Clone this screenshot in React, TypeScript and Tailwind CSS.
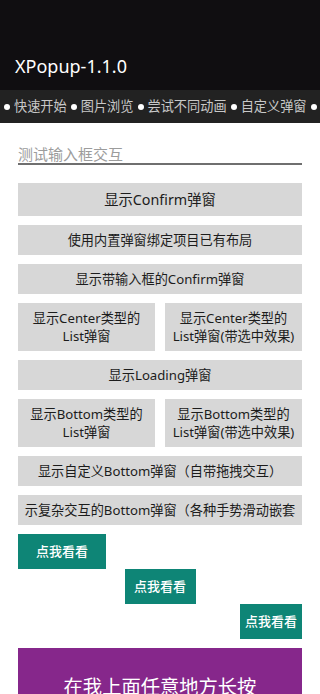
import React from "react";

const font = { fontFamily: '"Noto Sans", "Noto Sans CJK SC", sans-serif' };

function GrayBtn({ children }: { children: React.ReactNode }) {
  return (
    <div className="mt-[9px] h-[30px] bg-[#d7d7d7] flex items-center justify-center text-center text-[13.2px] text-[#1c1c1c] leading-[18px] overflow-hidden whitespace-nowrap">
      {children}
    </div>
  );
}

function TwoLine({ a, b }: { a: string; b: string }) {
  return (
    <div className="h-[48px] bg-[#d7d7d7] flex flex-col items-center justify-center text-[13.2px] leading-[18px] text-[#1c1c1c] whitespace-nowrap">
      <span>{a}</span>
      <span>{b}</span>
    </div>
  );
}

function Bullet() {
  return <span className="inline-block w-[6px] h-[6px] rounded-full bg-white mx-[4px] shrink-0" />;
}

export default function App() {
  const tabs = ["快速开始", "图片浏览", "尝试不同动画", "自定义弹窗"];
  return (
    <div className="w-[320px] h-[694px] overflow-hidden bg-white" style={font}>
      <div className="h-[90px] bg-[#100e11] pt-[53px] px-[15px]">
        <div className="text-[18px] leading-[26px] text-white">XPopup-1.1.0</div>
      </div>
      <div className="h-[33px] bg-[#222222] flex items-center whitespace-nowrap overflow-hidden text-[13.2px] text-[#c8c8c8]">
        {tabs.map((t) => (
          <React.Fragment key={t}>
            <Bullet />
            <span>{t}</span>
          </React.Fragment>
        ))}
        <Bullet />
      </div>
      <div className="px-[18px]">
        <div className="mt-[22px] h-[20px] box-border border-b-2 border-[#6f6f6f] text-[15px] leading-[18px] text-[#9c9c9c]">
          测试输入框交互
        </div>
        <div className="mt-[18px] h-[33px] bg-[#d7d7d7] flex items-center justify-center text-[14.3px] text-[#1c1c1c]">
          显示Confirm弹窗
        </div>
        <GrayBtn>使用内置弹窗绑定项目已有布局</GrayBtn>
        <GrayBtn>显示带输入框的Confirm弹窗</GrayBtn>
        <div className="mt-[9px] grid grid-cols-2 gap-[10px]">
          <TwoLine a="显示Center类型的" b="List弹窗" />
          <TwoLine a="显示Center类型的" b="List弹窗(带选中效果)" />
        </div>
        <GrayBtn>显示Loading弹窗</GrayBtn>
        <div className="mt-[9px] grid grid-cols-2 gap-[10px]">
          <TwoLine a="显示Bottom类型的" b="List弹窗" />
          <TwoLine a="显示Bottom类型的" b="List弹窗(带选中效果)" />
        </div>
        <GrayBtn>显示自定义Bottom弹窗（自带拖拽交互）</GrayBtn>
        <GrayBtn>示复杂交互的Bottom弹窗（各种手势滑动嵌套</GrayBtn>
        <div className="mt-[9px] flex flex-col">
          <div className="self-start w-[88px] h-[35px] bg-[#0e8576] text-white text-[13px] font-medium flex items-center justify-center">点我看看</div>
          <div className="self-center w-[71px] h-[35px] bg-[#0e8576] text-white text-[13px] font-medium flex items-center justify-center">点我看看</div>
          <div className="self-end w-[62px] h-[35px] bg-[#0e8576] text-white text-[13px] font-medium flex items-center justify-center">点我看看</div>
        </div>
        <div className="mt-[9px] h-[120px] bg-[#86278b] text-white text-[19.3px] leading-[28px] pt-[25px] text-center whitespace-nowrap">
          在我上面任意地方长按
        </div>
      </div>
    </div>
  );
}
